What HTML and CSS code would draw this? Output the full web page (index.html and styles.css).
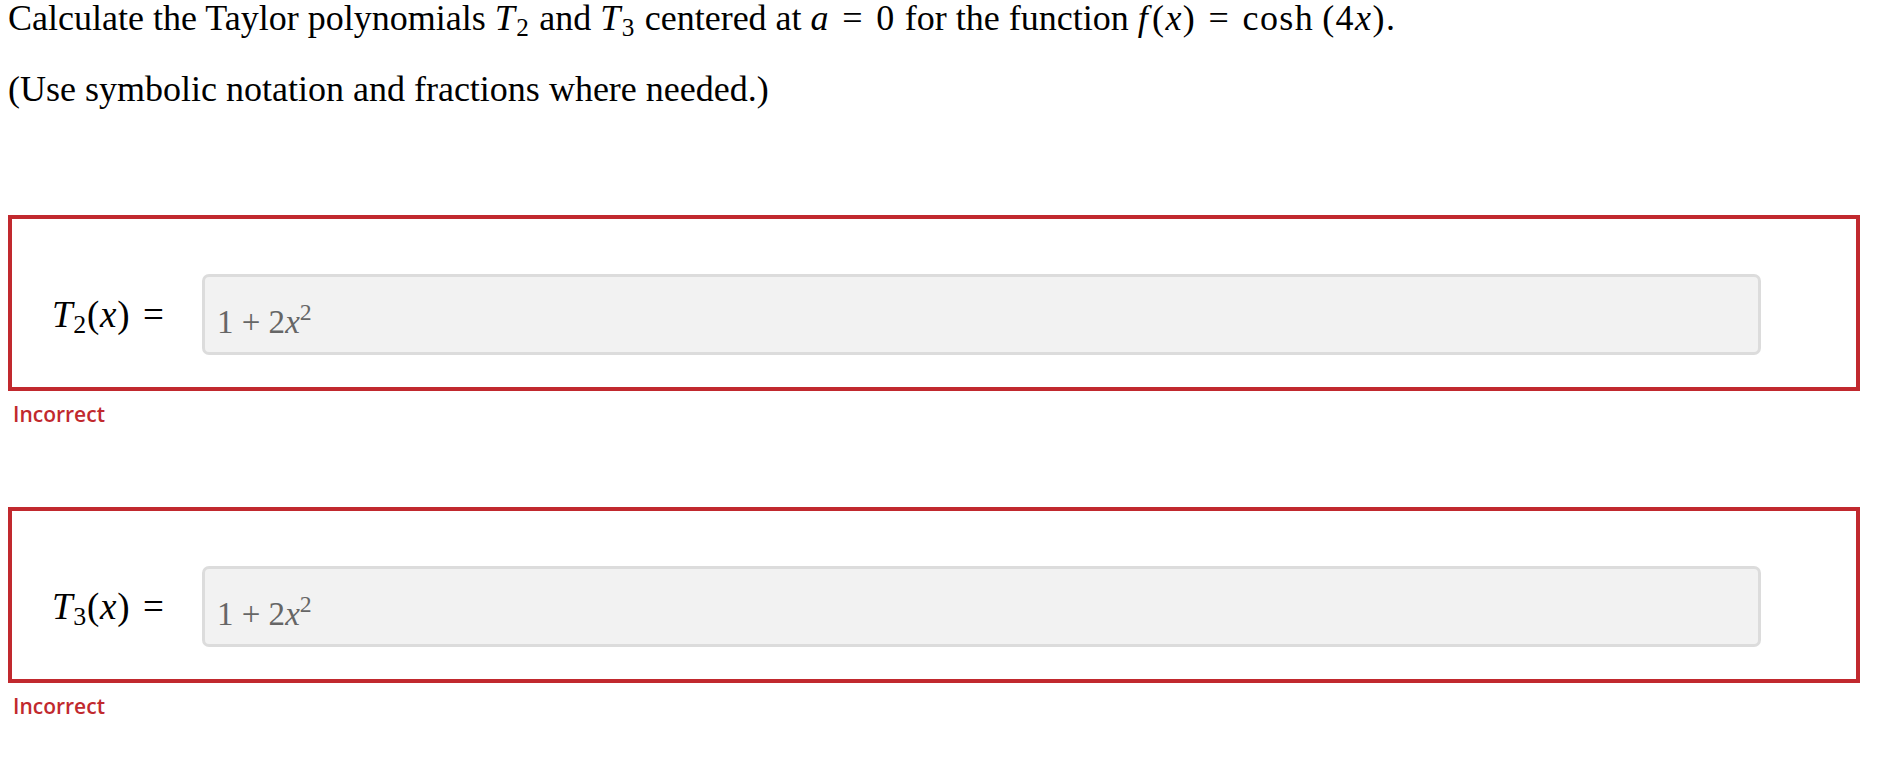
FILE: index.html
```html
<!DOCTYPE html>
<html lang="en">
<head>
  <meta charset="UTF-8" />
  <title>Taylor polynomials</title>
  <link rel="stylesheet" href="styles.css">
</head>
<body>
  <div class="page">
    <p class="prompt">Calculate the Taylor polynomials <span class="m"><i>T</i><sub>2</sub></span> and <span class="m"><i>T</i><sub>3</sub></span> centered at <span class="m"><i>a</i><span class="op">=</span>0</span> for the function <span class="m"><i class="f">f</i>(<i>x</i>)<span class="op">=</span>cosh<span class="thin"></span>(4<i>x</i>)</span>.</p>
    <p class="prompt hint">(Use symbolic notation and fractions where needed.)</p>

    <div class="answer">
      <div class="row">
        <div class="label"><i>T</i><sub>2</sub>(<i>x</i>)<span class="op">=</span></div>
        <div class="field">1 + 2<i>x</i><sup>2</sup></div>
      </div>
    </div>
    <div class="feedback">Incorrect</div>

    <div class="answer">
      <div class="row">
        <div class="label"><i>T</i><sub>3</sub>(<i>x</i>)<span class="op">=</span></div>
        <div class="field">1 + 2<i>x</i><sup>2</sup></div>
      </div>
    </div>
    <div class="feedback">Incorrect</div>
  </div>
</body>
</html>
```
FILE: styles.css
```css
body {
  margin: 0;
  padding: 0;
  background: #fff;
  color: #000;
  font-family: "Liberation Serif", "Times New Roman", serif;
}
.page {
  padding: 0 20px 0 8px;
}
.prompt {
  margin: 0;
  font-size: 36px;
  line-height: 36px;
}
.hint {
  margin-top: 35px;
}
.m {
  letter-spacing: 0.04em;
}
.m i {
  font-style: italic;
}
.m .f {
  padding-right: 0.08em;
}
.m sub, .label sub {
  font-size: 0.7em;
  line-height: 0;
  vertical-align: -0.22em;
}
.op {
  padding: 0 0.34em;
}
.thin {
  padding-left: 0.22em;
}
.answer {
  margin-top: 108px;
  border: 4px solid #c1292e;
  padding: 55px 95px 32px 40px;
}
.feedback + .answer {
  margin-top: 79px;
}
.row {
  display: flex;
  align-items: center;
}
.label {
  width: 150px;
  font-size: 37px;
  line-height: 40px;
  letter-spacing: 0.02em;
}
.field {
  flex: 1;
  box-sizing: content-box;
  border: 3px solid #dcdcdc;
  border-radius: 7px;
  background: #f2f2f2;
  color: #666;
  font-size: 33px;
  line-height: 32px;
  padding: 29px 12px 0 12px;
  height: 46px;
}
.field sup {
  font-size: 0.72em;
  line-height: 0;
  vertical-align: 0.55em;
}
.feedback {
  margin-top: 9px;
  padding-left: 5px;
  font-family: "Open Sans", "Noto Sans", sans-serif;
  font-weight: 600;
  font-size: 21px;
  line-height: 28px;
  color: #c1292e;
}
```
